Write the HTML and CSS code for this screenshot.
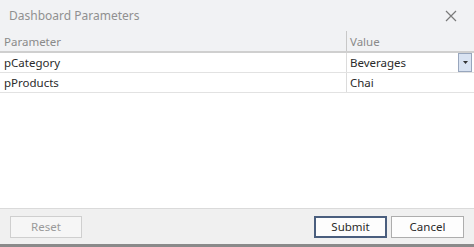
FILE: index.html
```html
<!DOCTYPE html>
<html>
<head>
<meta charset="utf-8">
<link rel="stylesheet" href="styles.css">
</head>
<body>
<div class="dialog">
  <div class="titlebar">
    <span class="title">Dashboard Parameters</span>
    <svg class="close" width="12" height="12" viewBox="0 0 12 12"><path d="M1 1L11 11M11 1L1 11" stroke="#7a7a7a" stroke-width="1.2" fill="none"/></svg>
  </div>
  <div class="grid">
    <div class="row head">
      <div class="cell name">Parameter</div>
      <div class="cell value">Value</div>
    </div>
    <div class="row">
      <div class="cell name">pCategory</div>
      <div class="cell value combo">
        <span>Beverages</span>
        <span class="dd"><svg width="5" height="3" viewBox="0 0 5 3"><path d="M0 0H5L2.5 3Z" fill="#333"/></svg></span>
      </div>
    </div>
    <div class="row">
      <div class="cell name">pProducts</div>
      <div class="cell value">Chai</div>
    </div>
  </div>
  <div class="empty"></div>
  <div class="footer">
    <button class="btn disabled">Reset</button>
    <div class="spacer"></div>
    <button class="btn primary">Submit</button>
    <button class="btn">Cancel</button>
  </div>
  <div class="strip"></div>
</div>
</body>
</html>
```
FILE: styles.css
```css
html, body { margin: 0; padding: 0; }
body { width: 474px; height: 247px; overflow: hidden; background: #fff; font-family: "Noto Sans", "Open Sans", sans-serif; font-size: 11.5px; color: #2a2a2a; }
.dialog { display: flex; flex-direction: column; height: 247px; background: #fff; }
.titlebar { height: 31px; background: #f1f2f4; display: flex; align-items: center; justify-content: space-between; padding: 0 17px 0 9px; }
.title { color: #909090; font-size: 12px; }
.close { display: block; }
.grid { display: flex; flex-direction: column; }
.row { display: flex; height: 19px; border-bottom: 1px solid #e2e2e2; }
.row.head { height: 20px; background: #f1f2f4; border-bottom: 2px solid #cfcfcf; }
.cell { display: flex; align-items: center; padding-left: 4px; white-space: nowrap; }
.head .cell { color: #8a8a8a; }
.name { width: 342px; }
.value { flex: 1; border-left: 1px solid #dcdcdc; padding-left: 3px; }
.head .value { border-left-color: #c8c8c8; }
.combo { justify-content: space-between; padding-right: 2px; }
.dd { width: 14px; height: 19px; box-sizing: border-box; border: 1px solid #98a6bd; background: #d9e3f2; display: flex; align-items: center; justify-content: center; }
.dd svg { display: block; }
.empty { flex: 1; background: #fff; }
.footer { height: 35px; background: #f0f0f0; border-top: 1px solid #dadada; display: flex; align-items: center; padding: 0 10px; gap: 4px; }
.spacer { flex: 1; }
.btn { width: 73px; height: 22px; box-sizing: border-box; background: #fdfdfd; border: 1px solid #adadad; font-family: inherit; font-size: 11.5px; color: #2a2a2a; padding: 0; }
.btn.disabled { width: 72px; color: #9a9a9a; border-color: #cfcfcf; background: #f6f6f6; }
.btn.primary { border: 2px solid #4a5e7e; }
.strip { height: 3px; background: #8a8a8a; }
```
